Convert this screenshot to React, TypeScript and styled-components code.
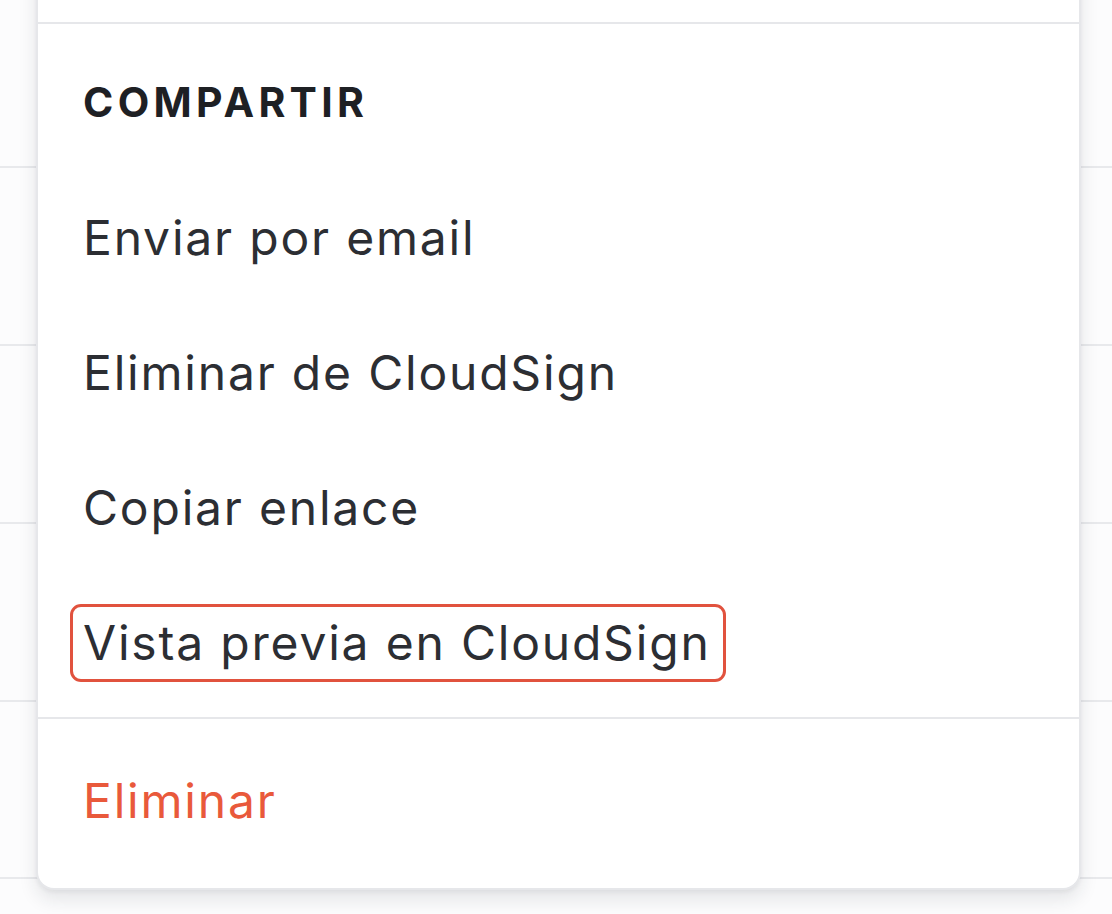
import React from "react";
import styled, { createGlobalStyle } from "styled-components";

const Global = createGlobalStyle`
  html, body { margin: 0; padding: 0; background: #fcfcfd; }
  * { box-sizing: border-box; }
`;

const Page = styled.div`
  position: relative;
  width: 1112px;
  height: 914px;
  overflow: hidden;
  background: #fcfcfd;
  font-family: Inter, "Noto Sans", "Liberation Sans", sans-serif;
`;

const Rows = styled.div`
  display: flex;
  flex-direction: column;
`;

const BgRow = styled.div<{ $h: number }>`
  height: ${(p) => p.$h}px;
  border-bottom: 2px solid #e8e9ec;
`;

const Menu = styled.div`
  position: absolute;
  left: 36px;
  top: -40px;
  width: 1045px;
  height: 930px;
  display: flex;
  flex-direction: column;
  background: #ffffff;
  border: 2px solid #e6e7ea;
  border-top: none;
  border-radius: 0 0 18px 18px;
  box-shadow: 0 10px 18px rgba(30, 35, 50, 0.10), 0 2px 4px rgba(30, 35, 50, 0.06);
`;

const TopArea = styled.div`
  height: 62px;
`;

const Divider = styled.div`
  height: 2px;
  background: #e6e7ea;
`;

const Section = styled.div<{ $pt: number; $pb: number }>`
  display: flex;
  flex-direction: column;
  padding: ${(p) => p.$pt}px 0 ${(p) => p.$pb}px 32px;
`;

const Header = styled.div`
  height: 60px;
  line-height: 60px;
  padding-left: 13px;
  margin-bottom: 38px;
  font-size: 41px;
  font-weight: 700;
  letter-spacing: 4.3px;
  color: #1e2024;
`;

const Item = styled.div`
  height: 135px;
  display: flex;
  align-items: center;
`;

const Label = styled.span<{ $focus?: boolean; $danger?: boolean }>`
  display: inline-flex;
  align-items: center;
  height: 78px;
  padding: 0 12px 0 10px;
  border: 3px solid ${(p) => (p.$focus ? "#e1523e" : "transparent")};
  border-radius: 11px;
  font-size: 48px;
  letter-spacing: 1.8px;
  color: ${(p) => (p.$danger ? "#e9593b" : "#2c2e33")};
  white-space: nowrap;
`;

export default function App() {
  return (
    <Page>
      <Global />
      <Rows>
        <BgRow $h={168} />
        <BgRow $h={178} />
        <BgRow $h={178} />
        <BgRow $h={178} />
        <BgRow $h={177} />
      </Rows>
      <Menu>
        <TopArea />
        <Divider />
        <Section $pt={48} $pb={7}>
          <Header>COMPARTIR</Header>
          <Item>
            <Label>Enviar por email</Label>
          </Item>
          <Item>
            <Label>Eliminar de CloudSign</Label>
          </Item>
          <Item>
            <Label>Copiar enlace</Label>
          </Item>
          <Item>
            <Label $focus>Vista previa en CloudSign</Label>
          </Item>
        </Section>
        <Divider />
        <Section $pt={14} $pb={0}>
          <Item>
            <Label $danger>Eliminar</Label>
          </Item>
        </Section>
      </Menu>
    </Page>
  );
}
